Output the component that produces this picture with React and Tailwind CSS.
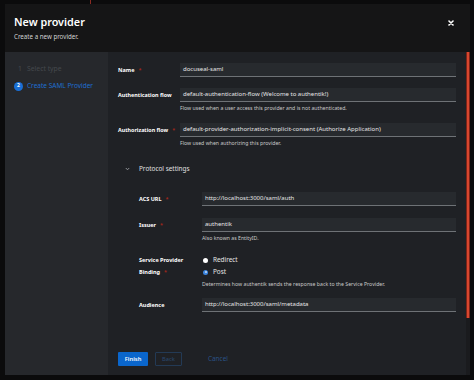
import React from "react";

const font = { fontFamily: '"Noto Sans", "DejaVu Sans", sans-serif' };

const Req = () => <span className="ml-[4px] text-[#a3271b]">*</span>;

const Input = ({ value }) => (
  <div className="flex h-[14px] flex-1 items-center border-b border-[#6e7276] bg-[#272a2e] px-[3px] text-[6px] text-[#e6e6e6]">
    {value}
  </div>
);

const Helper = ({ children }) => (
  <div className="mt-[2px] h-[8px] text-[5.2px] leading-[8px] text-[#c9c9c9]">{children}</div>
);

export default function App() {
  return (
    <div className="flex h-[380px] w-[474px] flex-col bg-[#0b0b0c]" style={font}>
      {/* top strip of the page behind */}
      <div className="relative h-[4px] shrink-0">
        <div className="absolute left-[90px] top-0 h-[4px] w-[1px] bg-[#8a2a22]" />
      </div>

      <div className="flex min-h-0 flex-1 pl-[5px] pr-[4px]">
        {/* modal */}
        <div className="flex h-[371px] flex-1 flex-col">
          {/* header */}
          <div className="relative h-[48px] shrink-0 bg-[#151516] pl-[9px] pt-[11px]">
            <div className="text-[10.8px] font-semibold leading-[14px] text-white">New provider</div>
            <div className="mt-[4px] text-[6.2px] leading-[8px] text-[#d2d2d2]">Create a new provider.</div>
            <svg className="absolute right-[16px] top-[16px]" width="6" height="6" viewBox="0 0 6 6">
              <path d="M1 1 L5 5 M5 1 L1 5" stroke="#fff" strokeWidth="1.6" strokeLinecap="round" />
            </svg>
          </div>

          {/* body */}
          <div className="flex min-h-0 flex-1">
            {/* nav */}
            <div className="w-[103px] shrink-0 bg-[#26282c] pt-[12px]">
              <div className="flex h-[10px] items-center text-[6.8px] text-[#45484d]">
                <span className="ml-[10px] w-[10px] text-center">1</span>
                <span className="ml-[2px]">Select type</span>
              </div>
              <div className="mt-[7px] flex h-[10px] items-center text-[6.5px] text-[#1f6fd0]">
                <span className="ml-[9px] flex h-[9px] w-[9px] items-center justify-center rounded-full bg-[#1a6fd6] text-[5px] font-bold text-white">
                  2
                </span>
                <span className="ml-[4px]">Create SAML Provider</span>
              </div>
            </div>

            {/* main */}
            <div className="flex min-w-0 flex-1 flex-col bg-[#1f2125] pl-[10px] pr-[10px]">
              <div className="mt-[11px] flex items-center">
                <div className="w-[62px] text-[5.5px] font-bold text-white">
                  Name<Req />
                </div>
                <Input value="docuseal-saml" />
              </div>

              <div className="mt-[11px] flex items-center">
                <div className="w-[62px] text-[5.4px] font-bold text-white">Authentication flow</div>
                <Input value="default-authentication-flow (Welcome to authentik!)" />
              </div>
              <div className="pl-[62px]">
                <Helper>Flow used when a user access this provider and is not authenticated.</Helper>
              </div>

              <div className="mt-[11px] flex items-center">
                <div className="w-[62px] text-[5.4px] font-bold text-white">
                  Authorization flow<Req />
                </div>
                <Input value="default-provider-authorization-implicit-consent (Authorize Application)" />
              </div>
              <div className="pl-[62px]">
                <Helper>Flow used when authorizing this provider.</Helper>
              </div>

              {/* protocol settings */}
              <div className="mt-[17px] flex h-[10px] items-center">
                <svg className="ml-[7px]" width="5" height="4" viewBox="0 0 5 4">
                  <path d="M0.8 1 L2.5 2.8 L4.2 1" stroke="#9a9da1" strokeWidth="0.9" fill="none" />
                </svg>
                <span className="ml-[9px] text-[6.4px] text-[#e0e0e0]">Protocol settings</span>
              </div>

              <div className="pl-[21px]">
                <div className="mt-[18px] flex items-center">
                  <div className="w-[63px] text-[5.5px] font-bold text-white">
                    ACS URL<Req />
                  </div>
                  <Input value="http://localhost:3000/saml/auth" />
                </div>

                <div className="mt-[12px] flex items-center">
                  <div className="w-[63px] text-[5.5px] font-bold text-white">
                    Issuer<Req />
                  </div>
                  <Input value="authentik" />
                </div>
                <div className="pl-[63px]">
                  <Helper>Also known as EntityID.</Helper>
                </div>

                <div className="mt-[12px] flex">
                  <div className="w-[63px] pt-[0px] text-[5.5px] font-bold leading-[12px] text-white">
                    Service Provider
                    <br />
                    Binding<Req />
                  </div>
                  <div className="flex-1">
                    <div className="flex h-[12px] items-center text-[6.4px] text-[#e6e6e6]">
                      <span className="ml-[1px] h-[5px] w-[5px] rounded-full bg-white" />
                      <span className="ml-[5px]">Redirect</span>
                    </div>
                    <div className="flex h-[12px] items-center text-[6.4px] text-[#e6e6e6]">
                      <span className="ml-[1px] flex h-[5px] w-[5px] items-center justify-center rounded-full bg-[#3d86e0]">
                        <span className="h-[2px] w-[2px] rounded-full bg-[#c5daf3]" />
                      </span>
                      <span className="ml-[5px]">Post</span>
                    </div>
                    <Helper>Determines how authentik sends the response back to the Service Provider.</Helper>
                  </div>
                </div>

                <div className="mt-[10px] flex items-center">
                  <div className="w-[63px] text-[5.5px] font-bold text-white">Audience</div>
                  <Input value="http://localhost:3000/saml/metadata" />
                </div>
              </div>

              {/* footer */}
              <div className="mt-[40px] flex items-center">
                <div className="flex h-[14px] w-[30px] items-center justify-center rounded-[1px] bg-[#0a66cc] text-[5.8px] font-semibold text-white">
                  Finish
                </div>
                <div className="ml-[7px] flex h-[14px] w-[27px] items-center justify-center rounded-[1px] border border-[#233a55] text-[5.8px] text-[#2a4a72]">
                  Back
                </div>
                <div className="ml-[26px] text-[6.4px] text-[#2a5285]">Cancel</div>
              </div>
            </div>

            {/* scrollbar */}
            <div className="w-[4px] shrink-0 bg-[#1a1b1e]">
              <div className="h-[266px] w-[4px] border-x border-[#7c2419] bg-[#d8472f]" />
            </div>
          </div>
        </div>
      </div>
    </div>
  );
}
